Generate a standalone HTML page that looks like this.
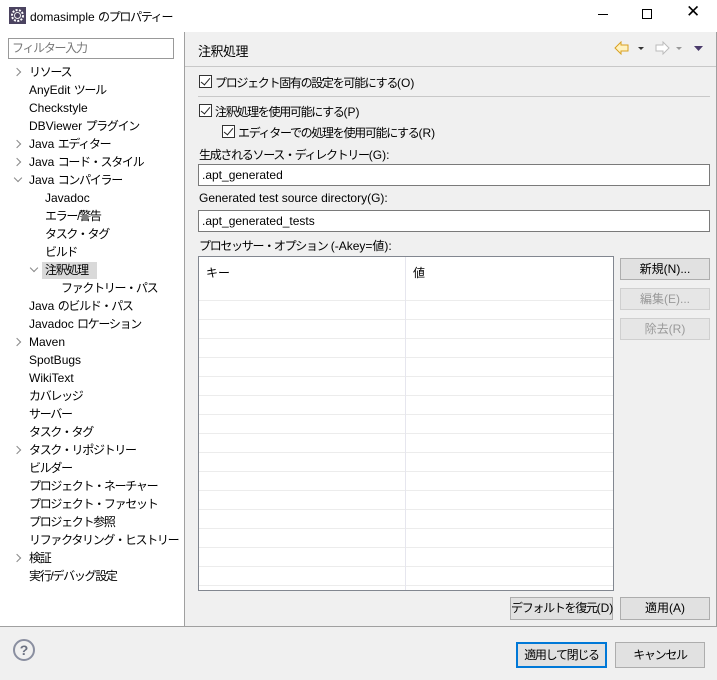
<!DOCTYPE html><html><head><style>
*{box-sizing:border-box;margin:0;padding:0}
body{width:717px;height:680px;position:relative;background:#f0f0f0;font-family:"Liberation Sans","Noto Sans CJK JP",sans-serif;font-size:12px;color:#000;overflow:hidden}
.a{position:absolute;white-space:nowrap}
.j{letter-spacing:-1.3px}
.btn{position:absolute;background:#e1e1e1;border:1px solid #adadad;text-align:center;line-height:20px;font-size:12px;white-space:nowrap}
.cb{position:absolute;width:13px;height:13px;border:1px solid #333;background:#fff}
.cb:after{content:"";position:absolute;left:3px;top:0px;width:4px;height:8px;border:solid #222;border-width:0 1.5px 1.5px 0;transform:rotate(40deg)}
.inp{position:absolute;background:#fff;border:1px solid #7a7a7a;height:22px;line-height:20px;padding-left:3px}
.arr{position:absolute;width:6px;height:6px;border:solid #888;border-width:0 1.3px 1.3px 0}
</style></head><body>
<div class="a" style="left:0;top:0;width:717px;height:32px;background:#fff"></div>
<svg class="a" style="left:9px;top:7px" width="17" height="17"><rect x="0" y="0" width="17" height="17" fill="#4b4360"/><circle cx="8.5" cy="8.5" r="5.5" fill="none" stroke="#fff" stroke-width="2" stroke-dasharray="2 1.4"/><circle cx="8.5" cy="8.5" r="3" fill="#4b4360" stroke="#eee"/></svg>
<div class="a" style="left:30px;top:8px;font-size:12px">domasimple <span class="j">のプロパティー</span></div>
<div class="a" style="left:598px;top:14px;width:10px;height:1px;background:#000"></div>
<div class="a" style="left:642px;top:9px;width:10px;height:10px;border:1px solid #000"></div>
<div class="a" style="left:686px;top:2px;font-size:17px">✕</div>
<div class="a" style="left:0;top:32px;width:185px;height:594px;background:#fff"></div>
<div class="a" style="left:184px;top:32px;width:1px;height:594px;background:#a0a0a0"></div>
<div class="a" style="left:716px;top:32px;width:1px;height:594px;background:#a0a0a0"></div>
<div class="inp j" style="left:8px;top:38px;width:166px;height:21px;color:#777;border-color:#999;line-height:19px">フィルター入力</div>
<div class="arr" style="left:14px;top:69px;transform:rotate(-45deg)"></div>
<div class="arr" style="left:14px;top:141px;transform:rotate(-45deg)"></div>
<div class="arr" style="left:14px;top:159px;transform:rotate(-45deg)"></div>
<div class="arr" style="left:15px;top:175px;transform:rotate(45deg)"></div>
<div class="arr" style="left:31px;top:265px;transform:rotate(45deg)"></div>
<div class="arr" style="left:14px;top:339px;transform:rotate(-45deg)"></div>
<div class="arr" style="left:14px;top:447px;transform:rotate(-45deg)"></div>
<div class="arr" style="left:14px;top:555px;transform:rotate(-45deg)"></div>
<div class="a" style="left:42px;top:262px;width:55px;height:17px;background:#d9d9d9"></div>
<div class="a" style="left:29px;top:63px;line-height:18px"><span class="j">リソース</span><br>AnyEdit <span class="j">ツール</span><br>Checkstyle<br>DBViewer <span class="j">プラグイン</span><br>Java <span class="j">エディター</span><br>Java <span class="j">コード・スタイル</span><br>Java <span class="j">コンパイラー</span><br><span style="padding-left:16px">Javadoc</span><br><span style="padding-left:16px" class="j">エラー/警告</span><br><span style="padding-left:16px" class="j">タスク・タグ</span><br><span style="padding-left:16px" class="j">ビルド</span><br><span style="padding-left:16px" class="j">注釈処理</span><br><span style="padding-left:32px" class="j">ファクトリー・パス</span><br>Java <span class="j">のビルド・パス</span><br>Javadoc <span class="j">ロケーション</span><br>Maven<br>SpotBugs<br>WikiText<br><span class="j">カバレッジ<br>サーバー<br>タスク・タグ<br>タスク・リポジトリー<br>ビルダー<br>プロジェクト・ネーチャー<br>プロジェクト・ファセット<br>プロジェクト参照<br>リファクタリング・ヒストリー<br>検証<br>実行/デバッグ設定</span></div>
<div class="a j" style="left:198px;top:41px;font-size:13px;letter-spacing:-0.5px">注釈処理</div>
<svg class="a" style="left:614px;top:41px" width="95" height="14"><path d="M1 7 L7 1 V4 H14 V10 H7 V13 Z" fill="#fff2c0" stroke="#d9a020"/><path d="M24 6 h6 l-3 3z" fill="#333"/><path d="M55 7 L49 1 V4 H42 V10 H49 V13 Z" fill="#fff" stroke="#bbb"/><path d="M62 6 h6 l-3 3z" fill="#999"/><path d="M80 5 h9 l-4.5 5z" fill="#4a3a6a"/></svg>
<div class="a" style="left:185px;top:66px;width:531px;height:1px;background:#c8c8c8"></div>
<div class="cb" style="left:199px;top:75px"></div>
<div class="a" style="left:215px;top:74px"><span class="j">プロジェクト固有の設定を可能にする</span>(O)</div>
<div class="a" style="left:198px;top:96px;width:512px;height:1px;background:#c8c8c8"></div>
<div class="cb" style="left:199px;top:104px"></div>
<div class="a" style="left:215px;top:103px"><span class="j">注釈処理を使用可能にする</span>(P)</div>
<div class="cb" style="left:222px;top:125px"></div>
<div class="a" style="left:238px;top:124px"><span class="j">エディターでの処理を使用可能にする</span>(R)</div>
<div class="a" style="left:199px;top:146px"><span class="j">生成されるソース・ディレクトリー</span>(G):</div>
<div class="inp" style="left:198px;top:164px;width:512px">.apt_generated</div>
<div class="a" style="left:199px;top:191px">Generated test source directory(G):</div>
<div class="inp" style="left:198px;top:210px;width:512px">.apt_generated_tests</div>
<div class="a" style="left:199px;top:237px"><span class="j">プロセッサー・オプション</span> (-Akey=値):</div>
<div class="a" style="left:198px;top:256px;width:416px;height:335px;background:#fff;border:1px solid #828790;overflow:hidden;background-image:repeating-linear-gradient(to bottom,transparent 0,transparent 18px,#ececec 18px,#ececec 19px);background-position:0 25px">
<div class="a" style="left:0;top:0;width:416px;height:43px;background:#fff"></div>
<div class="a" style="left:206px;top:0;width:1px;height:335px;background:#e6e6ee"></div>
<div class="a" style="left:7px;top:7px">キー</div><div class="a" style="left:214px;top:7px">値</div>
</div>
<div class="btn" style="left:620px;top:258px;width:90px;height:22px">新規(N)...</div>
<div class="btn" style="left:620px;top:288px;width:90px;height:22px;color:#999;border-color:#cfcfcf;background:#e6e6e6">編集(E)...</div>
<div class="btn" style="left:620px;top:318px;width:90px;height:22px;color:#999;border-color:#cfcfcf;background:#e6e6e6">除去(R)</div>
<div class="btn" style="left:510px;top:597px;width:103px;height:23px"><span class="j">デフォルトを復元</span>(D)</div>
<div class="btn" style="left:620px;top:597px;width:90px;height:23px">適用(A)</div>
<div class="a" style="left:0;top:626px;width:717px;height:1px;background:#a0a0a0"></div>
<div class="a" style="left:13px;top:639px;width:22px;height:22px;border:2px solid #8a8fa0;border-radius:50%;text-align:center;line-height:18px;font-weight:bold;color:#6a7080;font-size:14px">?</div>
<div class="btn j" style="left:516px;top:642px;width:91px;height:26px;border:2px solid #0078d7;line-height:22px">適用して閉じる</div>
<div class="btn j" style="left:615px;top:642px;width:90px;height:26px;line-height:24px">キャンセル</div>
</body></html>
